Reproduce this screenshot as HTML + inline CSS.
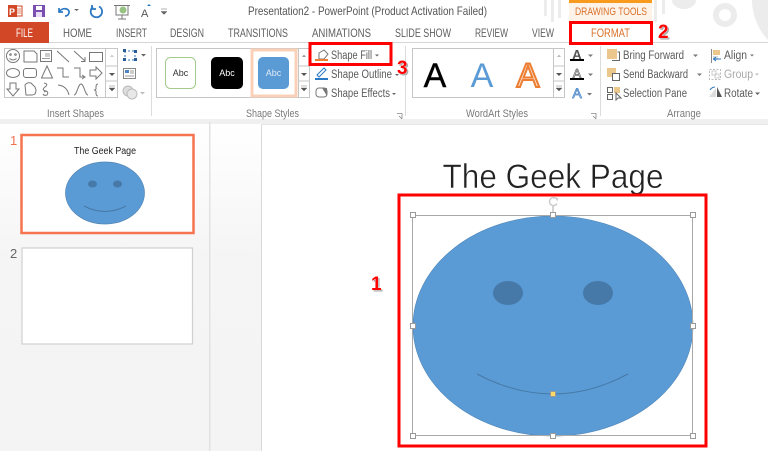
<!DOCTYPE html>
<html><head><meta charset="utf-8"><style>
html,body{margin:0;padding:0;background:#fff;width:768px;height:451px;overflow:hidden}
svg{display:block;font-family:"Liberation Sans",sans-serif;filter:blur(.35px)}
.t{font-size:12px;fill:#5f5f5f}
.r{font-size:11.5px;fill:#5a5a5a}
.g{font-size:11px;fill:#7a7a7a}
.i{fill:none;stroke:#777;stroke-width:1}
.n{font-weight:bold;fill:#f00;font-family:"Liberation Sans",sans-serif}
</style></head><body>
<svg width="768" height="451" viewBox="0 0 768 451" xmlns="http://www.w3.org/2000/svg">
<defs>
<linearGradient id="pg" x1="0" y1="0" x2="0" y2="1"><stop offset="0" stop-color="#fff"/><stop offset=".4" stop-color="#f5f5f5"/><stop offset="1" stop-color="#f4f4f4"/></linearGradient>
</defs>
<rect width="768" height="451" fill="#fff"/>

<!-- watermark -->
<g fill="#ececec">
<rect x="544" y="0" width="3" height="16"/><rect x="551" y="0" width="3" height="22"/><rect x="558" y="0" width="3" height="18"/>
<rect x="654" y="0" width="3" height="22"/><rect x="662" y="0" width="3" height="14"/>
<ellipse cx="684" cy="0" rx="12" ry="9"/>
<circle cx="725" cy="15" r="9" fill="none" stroke="#ececec" stroke-width="6"/>
<path d="M752 0H768V40C758 30 752 14 752 0Z"/>
</g>

<!-- quick access -->
<rect x="14" y="6" width="8" height="10" fill="#fff" stroke="#d24726"/>
<path d="M16 9h5M16 11h5M16 13h5" stroke="#e58a70"/>
<rect x="8" y="5" width="9" height="12" fill="#d24726"/>
<text x="9" y="15" font-size="9" font-weight="bold" fill="#fff">P</text>
<rect x="33" y="5" width="12" height="12" fill="#7a4fb0"/><rect x="36" y="6" width="6" height="4" fill="#fff"/><rect x="36" y="12" width="6" height="5" fill="#e9def5"/>
<path d="M59 8v4h4M59 12C62 7 70 8 69 13 68 16 66 16 65 16" fill="none" stroke="#2b79c2" stroke-width="1.7"/>
<path d="M74 9l2.500 2 2.500-2z" fill="#666"/>
<path d="M99 6.500A5.700 5.700 0 1 1 93 7M92 5v4h4" fill="none" stroke="#2b79c2" stroke-width="1.800"/>
<path d="M114 5.500h16M116 6v9h12V6M122 15v4M118 19h8" fill="none" stroke="#777"/><circle cx="123" cy="10" r="3.500" fill="#6aa84f" opacity=".7"/>
<text x="141" y="17" font-size="11" fill="#555">A</text><path d="M147 6l2 -2 2 2z" fill="#2b79c2"/>
<path d="M161 9h6M161 11.500l3 3 3-3z" fill="#666" stroke="#666" stroke-width=".5"/>

<text x="248" y="15" textLength="239" lengthAdjust="spacingAndGlyphs" font-size="12" fill="#555">Presentation2 - PowerPoint (Product Activation Failed)</text>

<rect x="569" y="0" width="83" height="22" fill="#fdf3e8"/>
<rect x="569" y="0" width="83" height="3" fill="#f79a1e"/>
<text x="575" y="15" textLength="72" lengthAdjust="spacingAndGlyphs" font-size="11" fill="#d9702a">DRAWING TOOLS</text>

<!-- tabs -->
<g class="t">
<text x="63" y="37" textLength="29" lengthAdjust="spacingAndGlyphs">HOME</text>
<text x="116" y="37" textLength="31" lengthAdjust="spacingAndGlyphs">INSERT</text>
<text x="170" y="37" textLength="34" lengthAdjust="spacingAndGlyphs">DESIGN</text>
<text x="228" y="37" textLength="60" lengthAdjust="spacingAndGlyphs">TRANSITIONS</text>
<text x="312" y="37" textLength="59" lengthAdjust="spacingAndGlyphs">ANIMATIONS</text>
<text x="395" y="37" textLength="56" lengthAdjust="spacingAndGlyphs">SLIDE SHOW</text>
<text x="475" y="37" textLength="33" lengthAdjust="spacingAndGlyphs">REVIEW</text>
<text x="532" y="37" textLength="22" lengthAdjust="spacingAndGlyphs">VIEW</text>
</g>
<text x="591" y="37" textLength="39" lengthAdjust="spacingAndGlyphs" font-size="12" fill="#d9702a">FORMAT</text>
<rect x="0" y="42" width="768" height="1" fill="#d6d6d6"/>
<rect x="0" y="22" width="49" height="21" fill="#d24726"/>
<text x="16" y="37" textLength="17" lengthAdjust="spacingAndGlyphs" font-size="11.500" fill="#fff">FILE</text>

<!-- ribbon bottom -->
<rect x="0" y="119" width="768" height="5" fill="#f0f0f0"/>
<g fill="#dcdcdc">
<rect x="151" y="46" width="1" height="70"/><rect x="405" y="46" width="1" height="70"/><rect x="600" y="46" width="1" height="70"/>
</g>

<!-- shapes gallery -->
<rect x="4.500" y="48.500" width="113" height="49" fill="#fff" stroke="#c6c6c6"/>
<path d="M105.500 49V97M106 66H117M106 81H117" stroke="#c6c6c6" fill="none"/>
<path d="M110 57l2-2.500 2 2.500z" fill="#ccc"/><path d="M109 73l3 3 3-3z" fill="#555"/><path d="M109 86h6M109 88l3 3 3-3z" fill="#555" stroke="#555" stroke-width=".4"/>
<g class="i">
<circle cx="13" cy="56" r="6.500"/><circle cx="10.500" cy="54.500" r=".8"/><circle cx="15.500" cy="54.500" r=".8"/><path d="M9.500 58.500Q13 61.500 16.500 58.500"/>
<path d="M24 51h10l3 3v8H24z"/>
<rect x="40.500" y="50.500" width="11" height="11"/><path d="M45 54h5M45 56h5M42 58.500h8" stroke="#999"/>
<path d="M57 51L69 62"/>
<path d="M74 51L85 61M85 57v4.500h-4"/>
<rect x="89.500" y="52.500" width="13" height="9"/>
<ellipse cx="13" cy="73" rx="6.500" ry="4.500"/>
<rect x="23.500" y="68.500" width="13" height="9" rx="2.500"/>
<path d="M47 66L52.500 78H41.500Z"/>
<path d="M57 68h6v9h6"/>
<path d="M74 68h6v9h4M82 75l3 2-3 2"/>
<path d="M90 70h6v-3l6 6-6 6v-3h-6z"/>
<path d="M10 83h6v6h3l-6 7-6-7h3z"/>
<path d="M25 85q2-3 6-2l4 4 1 3q0 5-4 5h-6z"/>
<path d="M44 83q5 1 1 4t1 4q3 1 1 4-3 1-4-1M44 92l2-1"/>
<path d="M58 85q9 1 11 10"/>
<path d="M74 95c3 0 4-11 7-11s4 11 7 11"/>
<path d="M98 84q-2 0-2 3v2l-1.500 1 1.500 1v2q0 3 2 3"/>
</g>
<g>
<path d="M124 51h12M124 60h12M125 51v9M135 51v9" fill="none" stroke="#2b79c2" stroke-dasharray="2 2"/>
<rect x="123" y="49" width="3" height="3" fill="#2b5c9a"/><rect x="134" y="50" width="3" height="3" fill="#2b5c9a"/><rect x="123" y="58" width="3" height="3" fill="#2b5c9a"/><rect x="134" y="58" width="3" height="3" fill="#2b5c9a"/>
<path d="M141 54l2.500 2.500 2.500-2.500z" fill="#666"/>
<rect x="123.500" y="68.500" width="12" height="10" fill="#fff" stroke="#888"/><rect x="125" y="70" width="4" height="3" fill="#4a86c8"/><path d="M130 71h4M130 73h4M125 76h9" stroke="#999"/>
<circle cx="128" cy="91" r="5" fill="#ddd" stroke="#bbb"/><circle cx="132" cy="94" r="5" fill="#e8e8e8" stroke="#bbb"/>
<path d="M140 92l2.500 2.500 2.500-2.500z" fill="#bbb"/>
</g>

<!-- shape styles gallery -->
<rect x="156.500" y="48.500" width="153" height="49" fill="#fff" stroke="#c6c6c6"/>
<rect x="165.500" y="57.500" width="30" height="31" rx="5" fill="#fff" stroke="#a3cc8c"/>
<text x="180.500" y="76" text-anchor="middle" font-size="9" fill="#333">Abc</text>
<rect x="211" y="57" width="32" height="32" rx="5" fill="#000"/>
<text x="227" y="76" text-anchor="middle" font-size="9" fill="#fff">Abc</text>
<rect x="252" y="50" width="44" height="46" fill="#fff" stroke="#fbd0b8" stroke-width="3"/>
<rect x="258" y="57" width="31" height="32" rx="5" fill="#5b9bd5"/>
<text x="273.500" y="76" text-anchor="middle" font-size="9" fill="#dfeaf6">Abc</text>
<path d="M298.500 49V97M299 66H309M299 81H309" stroke="#c6c6c6" fill="none"/>
<path d="M302 57l2-2.500 2 2.500z" fill="#999"/><path d="M301 73l3 3 3-3z" fill="#555"/><path d="M301 86h6M301 88l3 3 3-3z" fill="#555" stroke="#555" stroke-width=".4"/>

<!-- shape fill etc -->
<path d="M319 53l5-3 4 4-4 5h-5z" fill="#fff" stroke="#777"/>
<rect x="315" y="59" width="13" height="2" fill="#ed7d31"/>
<text x="331" y="59" textLength="41" lengthAdjust="spacingAndGlyphs" class="r">Shape Fill</text>
<path d="M375 54.500l2 2 2-2z" fill="#666"/>
<path d="M317 75l7-7 2 2-7 7z" fill="#fff" stroke="#2b79c2"/><rect x="315" y="78" width="13" height="2" fill="#2b79c2"/>
<text x="331" y="78" textLength="61" lengthAdjust="spacingAndGlyphs" class="r">Shape Outline</text>
<path d="M395 74l2 2 2-2z" fill="#666"/>
<rect x="316" y="88" width="11" height="9" rx="3" fill="#fff" stroke="#777"/><path d="M322 88h5v8z" fill="#777"/>
<text x="331" y="97" textLength="59" lengthAdjust="spacingAndGlyphs" class="r">Shape Effects</text>
<path d="M392 93l2 2 2-2z" fill="#666"/>

<!-- wordart -->
<rect x="412.500" y="48.500" width="152" height="49" fill="#fff" stroke="#c6c6c6"/>
<text x="435" y="87" text-anchor="middle" font-size="34" fill="#000" stroke="#000" stroke-width=".4">A</text>
<text x="482" y="87" text-anchor="middle" font-size="34" fill="#5b9bd5">A</text>
<text x="528" y="87" text-anchor="middle" font-size="34" fill="#fbe3d3" stroke="#ed7d31" stroke-width="2">A</text>
<path d="M553.500 49V97M554 66H564M554 81H564" stroke="#c6c6c6" fill="none"/>
<path d="M557 57l2-2.500 2 2.500z" fill="#bbb"/><path d="M556 73l3 3 3-3z" fill="#555"/><path d="M556 86h6M556 88l3 3 3-3z" fill="#555" stroke="#555" stroke-width=".4"/>

<text x="577" y="59" text-anchor="middle" font-size="13" fill="#555" font-weight="bold">A</text><rect x="570" y="59" width="14" height="2" fill="#000"/>
<path d="M588 54.500l2.500 2.500 2.500-2.500z" fill="#777"/>
<text x="577" y="78" text-anchor="middle" font-size="13" fill="#fff" stroke="#666" stroke-width=".7">A</text><rect x="570" y="78" width="14" height="2" fill="#000"/>
<path d="M588 73.500l2.500 2.500 2.500-2.500z" fill="#777"/>
<text x="577" y="98" text-anchor="middle" font-size="14" fill="#d3e3f5" stroke="#4a86c8" stroke-width=".8">A</text>
<path d="M587 93l2.500 2.500 2.500-2.500z" fill="#777"/>

<!-- arrange -->
<rect x="607" y="49" width="10" height="10" fill="#ecc78c"/><path d="M612 60.500h7.500V52h-2" fill="none" stroke="#666"/>
<text x="623" y="59" textLength="61" lengthAdjust="spacingAndGlyphs" class="r">Bring Forward</text>
<path d="M693 54.500l2.500 2.500 2.500-2.500z" fill="#777"/>
<rect x="607" y="68" width="9" height="9" fill="#ecc78c"/><rect x="612.500" y="73.500" width="7" height="7" fill="#fff" stroke="#666"/>
<text x="623" y="78" textLength="65" lengthAdjust="spacingAndGlyphs" class="r">Send Backward</text>
<path d="M697 73.500l2.500 2.500 2.500-2.500z" fill="#777"/>
<rect x="607.500" y="87.500" width="5" height="5" fill="none" stroke="#666"/><rect x="614" y="87" width="6" height="6" fill="#ecc78c"/><rect x="607.500" y="94.500" width="5" height="5" fill="none" stroke="#666"/><path d="M616 93v7l2-2h3z" fill="#fff" stroke="#666"/>
<text x="623" y="97" textLength="64" lengthAdjust="spacingAndGlyphs" class="r">Selection Pane</text>
<path d="M711.500 49V63" stroke="#888"/><rect x="713" y="50" width="7" height="5" fill="#ecc78c"/><rect x="713" y="56" width="5" height="4" fill="#ddd"/><path d="M721 59h-7M716 57l-2.500 2 2.500 2" fill="none" stroke="#2b79c2"/>
<text x="724" y="59" textLength="23" lengthAdjust="spacingAndGlyphs" class="r">Align</text>
<path d="M750 54.500l2 2 2-2z" fill="#777"/>
<rect x="709.500" y="69.500" width="11" height="10" fill="none" stroke="#bbb" stroke-dasharray="2 1.500"/><rect x="712" y="71" width="4" height="4" fill="none" stroke="#ccc"/><rect x="715" y="74" width="4" height="4" fill="none" stroke="#ccc"/>
<text x="724" y="78" textLength="29" lengthAdjust="spacingAndGlyphs" font-size="11.500" fill="#aaa">Group</text>
<path d="M755 73.500l2 2 2-2z" fill="#bbb"/>
<path d="M709 97l7-9v9z" fill="#ddd"/><path d="M717 87l5 10h-5z" fill="#555"/><path d="M710 90q2-3 5-3" fill="none" stroke="#2b79c2"/>
<text x="724" y="97" textLength="29" lengthAdjust="spacingAndGlyphs" class="r">Rotate</text>
<path d="M755 92.500l2.500 2.500 2.500-2.500z" fill="#666"/>

<!-- group labels -->
<g class="g">
<text x="47" y="117" textLength="57" lengthAdjust="spacingAndGlyphs">Insert Shapes</text>
<text x="246" y="117" textLength="53" lengthAdjust="spacingAndGlyphs">Shape Styles</text>
<text x="466" y="117" textLength="62" lengthAdjust="spacingAndGlyphs">WordArt Styles</text>
<text x="667" y="117" textLength="34" lengthAdjust="spacingAndGlyphs">Arrange</text>
</g>
<path d="M397 113.500h5v5M399 116l3 3" fill="none" stroke="#888" stroke-width=".8"/>
<path d="M591 113.500h5v5M593 116l3 3" fill="none" stroke="#888" stroke-width=".8"/>

<!-- panels -->
<rect x="0" y="124" width="262" height="327" fill="url(#pg)"/>
<rect x="209" y="122" width="1.500" height="329" fill="#e2e2e2"/>
<rect x="262" y="125" width="506" height="326" fill="#fff"/>
<rect x="261" y="124" width="1" height="327" fill="#d8d8d8"/>
<rect x="261" y="124" width="507" height="1" fill="#e6e6e6"/>

<!-- thumbs -->
<text x="10" y="145" font-size="13" fill="#f0704e">1</text>
<rect x="21.500" y="135" width="172" height="98" fill="#fff" stroke="#f5734f" stroke-width="2.500"/>
<text x="105" y="154" text-anchor="middle" textLength="62" lengthAdjust="spacingAndGlyphs" font-size="10" fill="#222">The Geek Page</text>
<ellipse cx="105" cy="193" rx="39.500" ry="31" fill="#5b9bd5" stroke="#5285b3" stroke-width=".7"/>
<ellipse cx="92.500" cy="184" rx="4.500" ry="3.500" fill="#4679a8"/><ellipse cx="117.500" cy="184" rx="4.500" ry="3.500" fill="#4679a8"/>
<path d="M84 206Q105 217 126 206" fill="none" stroke="#4679a8"/>
<text x="10" y="258" font-size="13" fill="#666">2</text>
<rect x="22" y="248" width="170.500" height="96" fill="#fff" stroke="#d0d0d0" stroke-width="1.200"/>

<!-- slide -->
<text x="553" y="188" text-anchor="middle" textLength="221" lengthAdjust="spacingAndGlyphs" font-size="34" fill="#222" stroke="#fff" stroke-width=".5">The Geek Page</text>
<ellipse cx="553" cy="326" rx="140" ry="110" fill="#5b9bd5" stroke="#4f86b8" stroke-width=".6"/>
<ellipse cx="508" cy="293" rx="15" ry="12" fill="#4679a8"/>
<ellipse cx="598" cy="293" rx="15" ry="12" fill="#4679a8"/>
<path d="M477 374Q553 414 628 374" fill="none" stroke="#4679a8" stroke-width="1"/>
<rect x="412.500" y="215.500" width="280" height="220" fill="none" stroke="#a8a8a8" stroke-width="1"/>
<path d="M553 215V205" stroke="#aaa"/>
<path d="M556 198.500a4 4 0 1 0 1 5" fill="none" stroke="#ccc" stroke-width="1.500"/><path d="M555 197l3.500 1.500-1.500 3z" fill="#ccc"/>
<g fill="#fff" stroke="#9a9a9a">
<rect x="410.500" y="212.500" width="5" height="5"/><rect x="550.500" y="212.500" width="5" height="5"/><rect x="690.500" y="212.500" width="5" height="5"/>
<rect x="410.500" y="323.500" width="5" height="5"/><rect x="690.500" y="323.500" width="5" height="5"/>
<rect x="410.500" y="433.500" width="5" height="5"/><rect x="550.500" y="433.500" width="5" height="5"/><rect x="690.500" y="433.500" width="5" height="5"/>
</g>
<rect x="550.500" y="391.500" width="5" height="5" fill="#ffd966" stroke="#999"/>

<!-- annotations -->
<g fill="none" stroke="#f00" stroke-width="3">
<rect x="399" y="195" width="307" height="251"/>
<rect x="570.500" y="22.500" width="81" height="21"/>
<rect x="310" y="43.500" width="81" height="21"/>
</g>
<g class="n" font-size="19">
<text x="659.500" y="39.500" fill="#aaa">2</text><text x="658" y="38" stroke="#fff" stroke-width=".6" paint-order="stroke">2</text>
<text x="398.500" y="75.500" fill="#aaa">3</text><text x="397" y="74" stroke="#fff" stroke-width=".6" paint-order="stroke">3</text>
<text x="372.500" y="291.500" fill="#aaa">1</text><text x="371" y="290" stroke="#fff" stroke-width=".6" paint-order="stroke">1</text>
</g>
</svg>
</body></html>
